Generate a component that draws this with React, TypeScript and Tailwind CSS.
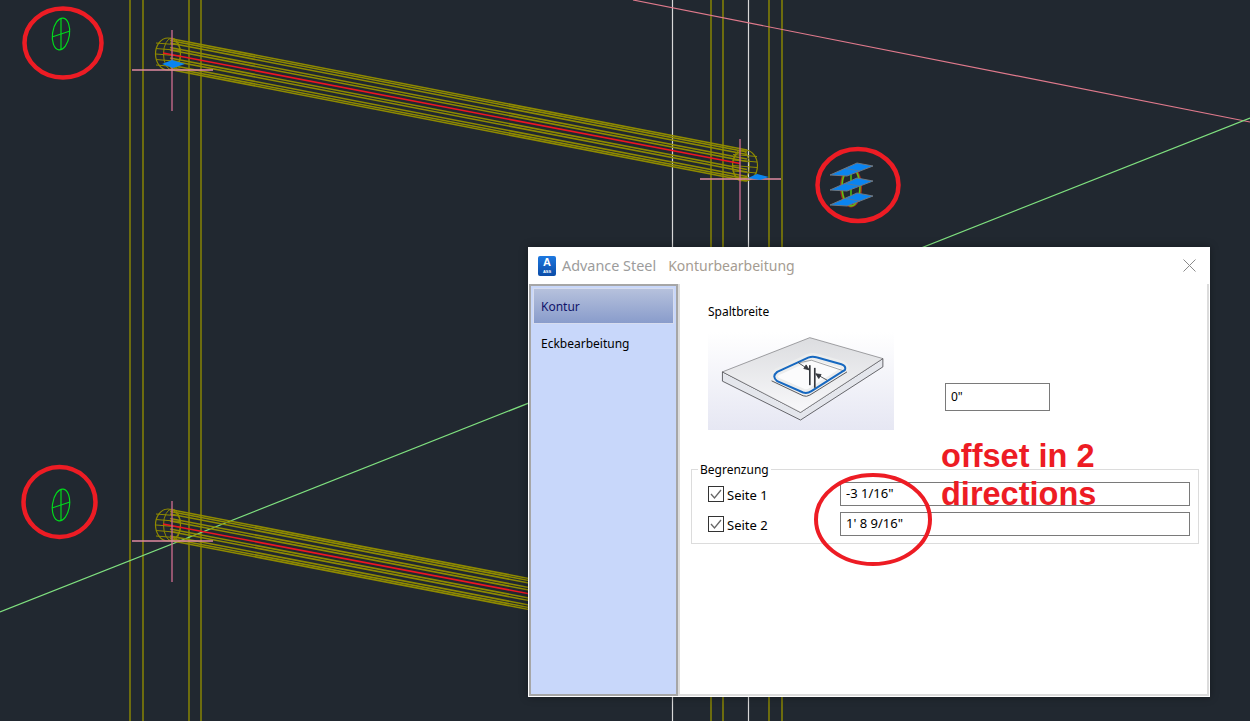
const strands = [-15.5, -13.5, -11, -6.5, -4, 4, 6.5, 11, 13.5, 15.5]
const ribs = [-11, -5.5, 0, 5.5, 11]

function Tube({ x1, y1, x2, y2 }: { x1: number; y1: number; x2: number; y2: number }) {
    return (
        <g fill="none" stroke="#8f8a00" strokeWidth="1.6">
            {strands.map((o) => (
                <line key={o} x1={x1 + 2} y1={y1 + o} x2={x2 + 2} y2={y2 + o} />
            ))}
            <ellipse cx={x1} cy={y1} rx="12.5" ry="16" strokeWidth="1.2" />
            <ellipse cx={x1 + 4} cy={y1} rx="8.5" ry="16" strokeWidth="1" />
            {ribs.map((o) => (
                <line key={o} x1={x1 - 12} y1={y1 + o} x2={x1 + 12} y2={y1 + o + 2} strokeWidth="1" />
            ))}
            <ellipse cx={x2} cy={y2} rx="12.5" ry="15.5" strokeWidth="1.2" />
            <ellipse cx={x2 - 4} cy={y2} rx="8.5" ry="15.5" strokeWidth="1" />
            {ribs.map((o) => (
                <line key={o} x1={x2 - 12} y1={y2 + o} x2={x2 + 12} y2={y2 + o + 2} strokeWidth="1" />
            ))}
            <line x1={x1 - 5} y1={y1 - 1} x2={x2 - 5} y2={y2 - 2} stroke="#ee1520" strokeWidth="1.6" />
        </g>
    )
}

function Cross({ x, y }: { x: number; y: number }) {
    return (
        <g stroke="#c4688a" strokeWidth="1.4">
            <line x1={x} y1={y - 40} x2={x} y2={y + 41} />
            <line x1={x - 40} y1={y} x2={x + 41} y2={y} stroke="#e08aa0" />
        </g>
    )
}

function Marker({ x, y }: { x: number; y: number }) {
    return (
        <g fill="none" stroke="#00d91c" strokeWidth="1.2">
            <ellipse cx={x} cy={y} rx="8.5" ry="16" transform={`rotate(8 ${x} ${y})`} />
            <line x1={x - 9} y1={y + 3} x2={x + 9} y2={y - 3} />
            <line x1={x} y1={y - 15} x2={x} y2={y + 15} />
        </g>
    )
}

function Plane({ y }: { y: number }) {
    return (
        <g stroke="#6f7780" strokeWidth="1">
            <polygon points={`830,${y + 11} 857,${y - 1} 873,${y + 2} 847,${y + 12}`} fill="#0a84f0" />
            <line x1={845} y1={y + 4.5} x2={860} y2={y + 7} strokeWidth="0.7" />
        </g>
    )
}

function CadDrawing() {
    return (
        <svg className="absolute inset-0" width="1250" height="721" viewBox="0 0 1250 721">
            <g stroke="#8f8a00" strokeWidth="1.4">
                {[130, 143, 189, 201, 711, 723, 769, 782].map((x) => (
                    <line key={x} x1={x} y1="0" x2={x} y2="721" />
                ))}
            </g>
            <g stroke="#d8d8d8" strokeWidth="1.2">
                <line x1="672.5" y1="0" x2="672.5" y2="721" />
                <line x1="748.5" y1="0" x2="748.5" y2="721" />
            </g>
            <line x1="633" y1="0" x2="1250" y2="122" stroke="#e07a8c" strokeWidth="1.2" />
            <line x1="0" y1="612" x2="1250" y2="118" stroke="#7fe07f" strokeWidth="1.2" />
            <Tube x1={168} y1={54} x2={745} y2={165.5} />
            <Tube x1={168} y1={525} x2={745} y2={636} />
            <Cross x={172} y={70} />
            <Cross x={740} y={179} />
            <Cross x={172} y={541} />
            <polygon points="162,64 172,60 185,64 173,68" fill="#0a84f0" />
            <polygon points="748,178 757,174 769,177 760,180" fill="#0a84f0" />
            <Marker x={61} y={34} />
            <Marker x={61} y={505} />
            <ellipse cx="851" cy="187" rx="9.5" ry="19" fill="none" stroke="#a82a20" strokeWidth="3" />
            <ellipse cx="851" cy="187" rx="9" ry="19" fill="none" stroke="#55cc10" strokeWidth="1.4" />
            <line x1="851" y1="170" x2="851" y2="204" stroke="#55cc10" strokeWidth="1.4" />
            <Plane y={164} />
            <Plane y={179} />
            <Plane y={194} />
            <g fill="none" stroke="#ed1c24" strokeWidth="4.5">
                <ellipse cx="63" cy="43" rx="38.5" ry="34.5" />
                <ellipse cx="59.5" cy="502" rx="36" ry="35" />
                <ellipse cx="858" cy="185" rx="40.5" ry="36" />
            </g>
        </svg>
    )
}

const slot = "M262 140 L355 97 Q368 92 380 96 L455 117 Q470 122 466 134 L365 198 Q352 206 340 202 L262 168 Q244 154 262 140 Z"

function PlateImage() {
    return (
        <div className="h-[98px] w-[186px] bg-gradient-to-b from-white to-[#e6e7f3]">
            <svg width="186" height="98" viewBox="55 20 557 295">
                <defs>
                    <linearGradient id="top" x1="0" y1="0" x2="0" y2="1">
                        <stop offset="0" stopColor="#dcdde0" />
                        <stop offset="1" stopColor="#f8f8fa" />
                    </linearGradient>
                </defs>
                <polygon points="97,140 97,168 332,285 580,125 580,100 332,262" fill="#e4e6ec" stroke="#4a4a4e" strokeWidth="2.5" strokeLinejoin="round" />
                <polygon points="97,140 360,37 580,100 332,262" fill="url(#top)" stroke="#4a4a4e" strokeWidth="1.5" strokeLinejoin="round" />
                <path d={slot} fill="#fbfbfc" stroke="#eceded" strokeWidth="22" strokeLinejoin="round" />
                <path d="M245 167 L340 212 Q350 216 360 210 L472 140" fill="none" stroke="#5a5a5e" strokeWidth="3" />
                <path d="M330 112 L365 105 L465 138" fill="none" stroke="#77787c" strokeWidth="2" />
                <path d={slot} fill="none" stroke="#1668c0" strokeWidth="6" />
                <g stroke="#33363c" strokeWidth="5">
                    <line x1="360" y1="120" x2="360" y2="180" />
                    <line x1="375" y1="128" x2="375" y2="188" />
                </g>
                <g stroke="#33363c" strokeWidth="2.5" fill="#33363c">
                    <line x1="325" y1="112" x2="358" y2="134" />
                    <polygon points="358,134 342,130 349,119" />
                    <line x1="412" y1="165" x2="378" y2="146" />
                    <polygon points="378,146 394,148 387,160" />
                </g>
            </svg>
        </div>
    )
}

function CheckRow({ label, value }: { label: string; value: string }) {
    return (
        <div className="flex h-6 items-center">
            <span className="flex h-4 w-4 items-center justify-center border border-[#333] bg-white">
                <svg width="12" height="12" viewBox="0 0 12 12" fill="none" stroke="#666" strokeWidth="1.3">
                    <path d="M1 6l3.5 4L11 2" />
                </svg>
            </span>
            <span className="ml-[3px] w-[113px] pt-[4px] text-[13px] text-black">{label}</span>
            <div className="flex h-6 flex-1 items-center border border-[#7a7a7a] pl-[5px] text-[13px] text-black">{value}</div>
        </div>
    )
}

export default function App() {
    return (
        <div className="relative h-[721px] w-[1250px] overflow-hidden bg-[#212830] font-['Noto_Sans',sans-serif]">
            <CadDrawing />

            {/* DIALOG */}
            <div className="absolute left-[528px] top-[247px] flex h-[450px] w-[682px] flex-col bg-white shadow-[0_0_8px_rgba(0,0,0,0.35)]">
                <div className="flex h-[37px] items-center pl-[10px] pr-[14px]">
                    <div className="relative flex h-5 w-[18px] flex-col items-center rounded-[2px] bg-gradient-to-b from-[#1d78e0] to-[#0c4da8] font-['Liberation_Sans',sans-serif] text-white">
                        <span className="text-[11px] font-bold leading-[13px]">A</span>
                        <span className="text-[4px] font-bold leading-[5px]">ASS</span>
                    </div>
                    <span className="ml-[6px] text-[14.4px] text-[#9c9c9c]">Advance Steel</span>
                    <span className="ml-3 text-[14px] text-[#a59c92]">Konturbearbeitung</span>
                    <svg className="ml-auto" width="13" height="13" viewBox="0 0 13 13" stroke="#8a8a8a" strokeWidth="1">
                        <path d="M0.5 0.5l12 12M12.5 0.5l-12 12" />
                    </svg>
                </div>

                <div className="flex flex-1">
                    {/* SIDEBAR */}
                    <div className="mb-[1px] ml-[1px] w-[149px] border-2 border-[#a6a6a6] bg-[#c8d7fa] p-[2px] outline outline-1 outline-white">
                        <div className="flex h-9 items-center border border-[#d6dcee] bg-gradient-to-b from-[#b6c1dc] to-[#899ccb] pl-[7px] pt-[1px] text-[12px] text-[#10146a]">Kontur</div>
                        <div className="flex h-[40px] items-center pl-[8px] text-[12px] text-black">Eckbearbeitung</div>
                    </div>

                    {/* CONTENT */}
                    <div className="mb-[1px] mr-[1px] flex flex-1 flex-col border-b-2 border-l-2 border-r-2 border-[#dcdcdc]">
                        <div className="ml-[28px] mt-[19px] text-[12px] leading-[17px] text-black">Spaltbreite</div>
                        <div className="ml-[28px] mt-[12px] flex items-start">
                            <PlateImage />
                            <div className="ml-[51px] mt-[51px] flex h-7 w-[105px] items-center border border-[#7a7a7a] pl-[5px] text-[12px] text-black">0"</div>
                        </div>

                        <div className="relative ml-[11px] mr-[8px] mt-[39px] flex h-[75px] flex-col gap-[6px] border border-[#dcdcdc] pl-[16px] pr-[8px] pt-[12px]">
                            <span className="absolute left-[6px] top-[-9px] bg-white px-[2px] text-[12px] leading-[17px] text-black">Begrenzung</span>
                            <CheckRow label="Seite 1" value={'-3 1/16"'} />
                            <CheckRow label="Seite 2" value={'1\' 8 9/16"'} />
                        </div>
                    </div>
                </div>
            </div>

            {/* ANNOTATIONS */}
            <svg className="absolute left-[810px] top-[469px]" width="128" height="102" viewBox="810 469 128 102" fill="none">
                <ellipse cx="873" cy="519.5" rx="57" ry="44.5" stroke="#ed1c24" strokeWidth="4" />
            </svg>
            <div className="absolute left-[941px] top-[437px] font-['Liberation_Sans',sans-serif] text-[32.5px] font-bold leading-[38px] text-[#ed1c24]">
                offset in 2<br />directions
            </div>
        </div>
    )
}
